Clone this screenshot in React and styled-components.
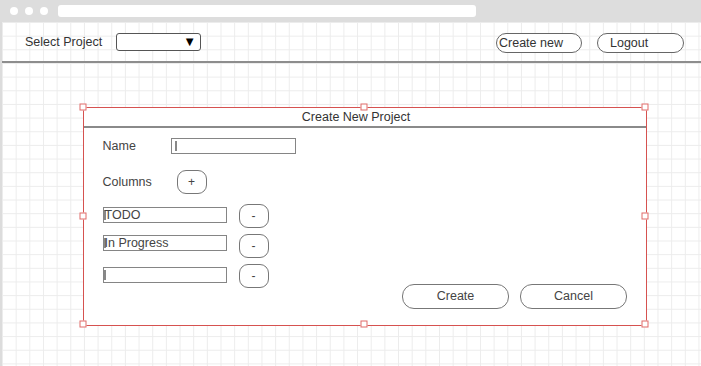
import React from 'react'
import styled, { createGlobalStyle } from 'styled-components'

const GlobalStyle = createGlobalStyle`
  html, body {
    margin: 0;
    padding: 0;
    background: #fff;
  }
  body {
    font-family: "Liberation Sans", Arial, sans-serif;
    color: #333;
  }
`

const columns = [
  { text: 'TODO', lift: 3 },
  { text: 'In Progress', lift: 1 },
  { text: '', lift: 3 },
]

function App() {
  return (
    <>
      <GlobalStyle />
      <Window>
        <Chrome>
          <Dot />
          <Dot />
          <Dot />
          <AddressBar />
        </Chrome>
        <Canvas>
          <Header>
            <Label>Select Project</Label>
            <Select>
              <Arrow>▼</Arrow>
            </Select>
            <Spacer />
            <PillButton $w={86} $pad={2}>Create new</PillButton>
            <PillButton $w={87} $pad={12}>Logout</PillButton>
          </Header>

          <Dialog>
            <Handle style={{ left: 0, top: 0 }} />
            <Handle style={{ left: '50%', top: 0 }} />
            <Handle style={{ left: '100%', top: 0 }} />
            <Handle style={{ left: 0, top: '50%' }} />
            <Handle style={{ left: '100%', top: '50%' }} />
            <Handle style={{ left: 0, top: '100%' }} />
            <Handle style={{ left: '50%', top: '100%' }} />
            <Handle style={{ left: '100%', top: '100%' }} />

            <DialogTitle>Create New Project</DialogTitle>
            <DialogBody>
              <Form>
                <NameRow>
                  <FieldLabel $w={68}>Name</FieldLabel>
                  <Field $w={125}>
                    <Caret $gap={3} />
                  </Field>
                </NameRow>
                <ColumnsRow>
                  <FieldLabel $w={74}>Columns</FieldLabel>
                  <SmallButton>+</SmallButton>
                </ColumnsRow>
                <ColumnList>
                  {columns.map((c, i) => (
                    <ColumnRow key={i}>
                      <Field $w={124} $lift={c.lift}>
                        <Caret $gap={0} />
                        {c.text}
                      </Field>
                      <SmallButton>-</SmallButton>
                    </ColumnRow>
                  ))}
                </ColumnList>
              </Form>
              <Actions>
                <ActionButton>Create</ActionButton>
                <ActionButton>Cancel</ActionButton>
              </Actions>
            </DialogBody>
          </Dialog>
        </Canvas>
      </Window>
    </>
  )
}

export default App

const Window = styled.div`
  width: 701px;
  height: 366px;
  display: flex;
  flex-direction: column;
  overflow: hidden;
`

const Chrome = styled.div`
  height: 22px;
  flex-shrink: 0;
  background: #dddddd;
  display: flex;
  align-items: center;
  padding-left: 10px;
  gap: 7px;
`

const Dot = styled.span`
  width: 8px;
  height: 8px;
  border-radius: 50%;
  background: #fff;
`

const AddressBar = styled.div`
  margin-left: 3px;
  width: 418px;
  height: 12px;
  border-radius: 3px;
  background: #fff;
`

const Canvas = styled.div`
  flex: 1;
  border-left: 2px solid #dcdcdc;
  background-color: #fff;
  background-image: linear-gradient(#ececec 1px, transparent 1px),
    linear-gradient(90deg, #ececec 1px, transparent 1px);
  background-size: 13.67px 13.67px;
`

const Header = styled.div`
  height: 39px;
  border-bottom: 2px solid #8d8d8d;
  display: flex;
  align-items: center;
  padding: 0 17px 0 23px;
  gap: 14px;
`

const Label = styled.span`
  font-size: 12.5px;
  color: #333;
`

const Select = styled.div`
  width: 79px;
  height: 16px;
  border: 1px solid #555;
  border-radius: 3px;
  background: #fff;
  display: flex;
  align-items: center;
  justify-content: flex-end;
  padding-right: 4px;
  box-sizing: content-box;
`

const Arrow = styled.span`
  font-size: 13px;
  color: #000;
  line-height: 1;
`

const Spacer = styled.div`
  flex: 1;
`

const PillButton = styled.div`
  width: ${(p) => p.$w}px;
  height: 20px;
  box-sizing: border-box;
  border: 1px solid #666;
  border-radius: 10px;
  background: #fff;
  font-size: 12.5px;
  color: #333;
  display: flex;
  align-items: center;
  padding-left: ${(p) => p.$pad}px;
  margin-top: 2px;
  & + & {
    margin-left: 1px;
  }
`

const Dialog = styled.div`
  position: relative;
  margin: 44px 0 0 81px;
  width: 564px;
  height: 219px;
  box-sizing: border-box;
  border: 1.5px solid #d65250;
  background: #fff;
  display: flex;
  flex-direction: column;
`

const Handle = styled.span`
  position: absolute;
  width: 5px;
  height: 5px;
  background: #fff;
  border: 1px solid #e06a68;
  transform: translate(-50%, -50%);
  margin: -0.75px 0 0 -0.75px;
`

const DialogTitle = styled.div`
  height: 18px;
  border-bottom: 2px solid #8a8a8a;
  text-align: center;
  font-size: 12.5px;
  line-height: 18px;
  color: #333;
  padding-right: 18px;
`

const DialogBody = styled.div`
  flex: 1;
  display: flex;
  justify-content: space-between;
  padding: 0 19px 16px 18.5px;
`

const Form = styled.div`
  display: flex;
  flex-direction: column;
  align-self: flex-start;
`

const NameRow = styled.div`
  display: flex;
  align-items: center;
  height: 16px;
  margin-top: 10px;
`

const ColumnsRow = styled.div`
  display: flex;
  align-items: center;
  height: 23px;
  margin-top: 16px;
`

const FieldLabel = styled.span`
  width: ${(p) => p.$w}px;
  font-size: 12.5px;
  color: #444;
`

const Field = styled.div`
  width: ${(p) => p.$w}px;
  height: 16px;
  box-sizing: border-box;
  border: 1.5px solid #858585;
  display: flex;
  align-items: center;
  font-size: 12.5px;
  line-height: 13px;
  color: #444;
  padding-left: 0.5px;
  align-self: ${(p) => (p.$lift !== undefined ? 'flex-start' : 'center')};
  margin-top: ${(p) => p.$lift || 0}px;
`

const Caret = styled.span`
  width: 1.5px;
  height: 10px;
  background: #888;
  margin-left: ${(p) => p.$gap}px;
  margin-right: ${(p) => (p.$gap ? 0 : -1)}px;
  flex-shrink: 0;
`

const ColumnList = styled.div`
  display: flex;
  flex-direction: column;
  gap: 6px;
  margin-top: 11px;
`

const ColumnRow = styled.div`
  display: flex;
  align-items: center;
  gap: 12px;
  height: 24px;
`

const SmallButton = styled.div`
  width: 30px;
  height: 24px;
  box-sizing: border-box;
  border: 1px solid #777;
  border-radius: 9px;
  background: #fff;
  font-size: 12px;
  color: #444;
  display: flex;
  align-items: center;
  justify-content: center;
`

const Actions = styled.div`
  align-self: flex-end;
  display: flex;
  gap: 11px;
`

const ActionButton = styled.div`
  width: 107px;
  height: 25px;
  box-sizing: border-box;
  border: 1px solid #777;
  border-radius: 12px;
  background: #fff;
  font-size: 12.5px;
  color: #444;
  display: flex;
  align-items: center;
  justify-content: center;
  padding-bottom: 2px;
`
